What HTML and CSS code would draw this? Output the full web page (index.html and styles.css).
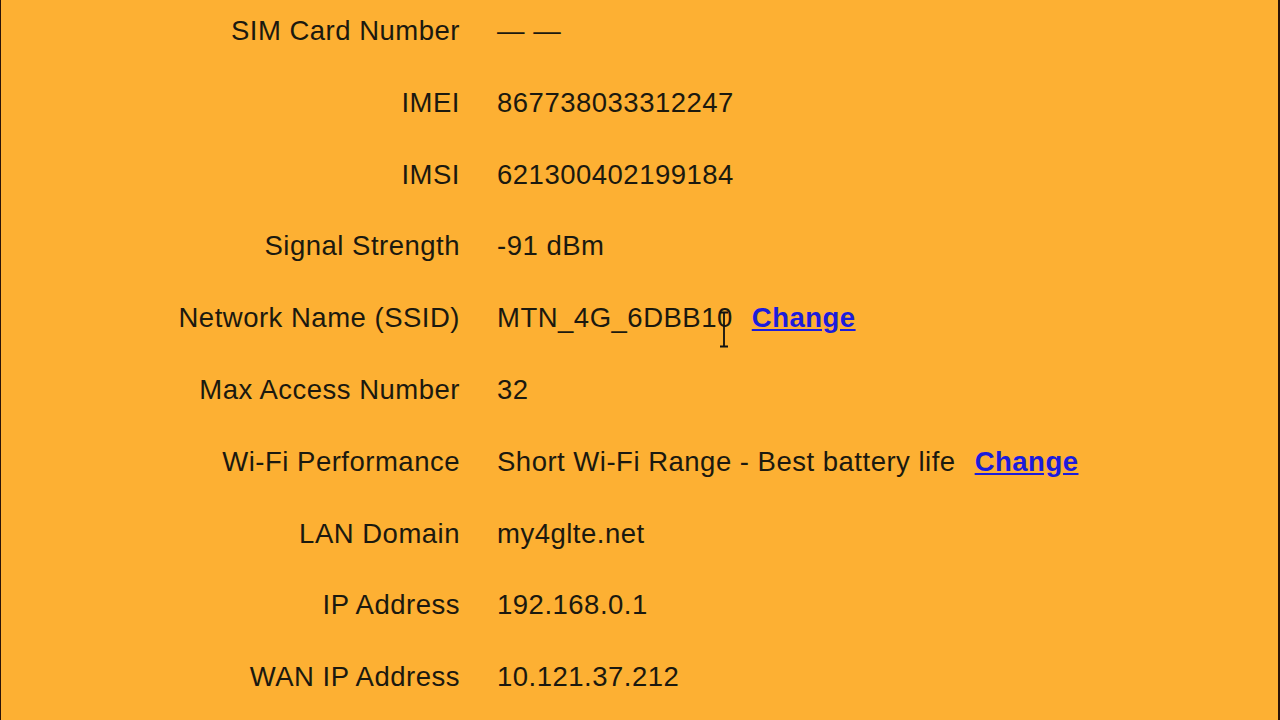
FILE: index.html
```html
<!DOCTYPE html>
<html>
<head>
<meta charset="utf-8">
<link rel="stylesheet" href="styles.css">
</head>
<body>
<div class="page">
  <div class="info">
    <div class="label">SIM Card Number</div><div class="value">— —</div>
    <div class="label">IMEI</div><div class="value">867738033312247</div>
    <div class="label">IMSI</div><div class="value">621300402199184</div>
    <div class="label">Signal Strength</div><div class="value">-91 dBm</div>
    <div class="label">Network Name (SSID)</div><div class="value cursor-host">MTN_4G_6DBB10<a class="change" href="#">Change</a><svg class="ibeam" width="12" height="38" viewBox="0 0 12 38"><path d="M2 1.5 H10 M6 1.5 V35.5 M2 35.5 H10" stroke="#111" stroke-width="1.8" fill="none"/></svg></div>
    <div class="label">Max Access Number</div><div class="value">32</div>
    <div class="label">Wi-Fi Performance</div><div class="value">Short Wi-Fi Range - Best battery life<a class="change" href="#">Change</a></div>
    <div class="label">LAN Domain</div><div class="value">my4glte.net</div>
    <div class="label">IP Address</div><div class="value">192.168.0.1</div>
    <div class="label">WAN IP Address</div><div class="value">10.121.37.212</div>
  </div>
</div>
</body>
</html>
```

FILE: styles.css
```css
html, body {
  margin: 0;
  padding: 0;
  height: 100%;
  overflow: hidden;
}
body {
  background: #fdb033;
}
.page {
  box-sizing: border-box;
  height: 720px;
  border-left: 1px solid #2b1206;
  border-right: 2px solid #2b1206;
  background: #fdb033;
  overflow: hidden;
}
.info {
  display: grid;
  grid-template-columns: 459px 1fr;
  grid-auto-rows: 71.8px;
  column-gap: 37px;
  margin-top: -5px;
  font-family: "Liberation Sans", Arial, sans-serif;
  font-size: 27.5px;
  letter-spacing: 0.5px;
  line-height: 71.8px;
  color: #1b190f;
}
.label {
  text-align: right;
  white-space: nowrap;
}
.value {
  white-space: nowrap;
}
.cursor-host {
  position: relative;
}
.change {
  margin-left: 19px;
  color: #1c1cdb;
  font-weight: bold;
  text-decoration: underline;
}
.ibeam {
  position: absolute;
  left: 221px;
  top: 29px;
}
```
